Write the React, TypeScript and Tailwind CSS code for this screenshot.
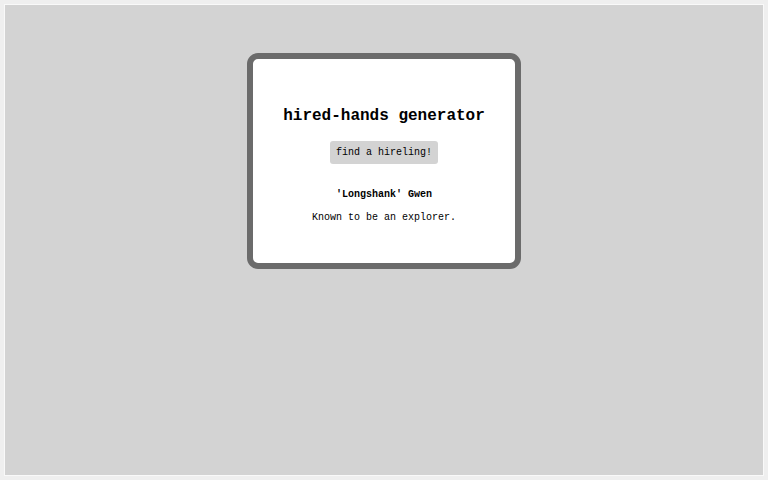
export default function App() {
  return (
    <div className="h-[480px] w-[768px] bg-[#efefef] p-1 font-['Liberation_Mono',monospace] text-black">
      <div className="flex h-full w-full justify-center border border-[#f9f9f9] bg-[#d3d3d3] pt-[48px]">
        <div className="flex h-[216px] w-[274px] flex-col items-center rounded-[11px] border-[6px] border-[#6b6b6b] bg-white pt-[47px]">
          <h1 className="text-[16px] font-bold leading-[20px]">hired-hands generator</h1>
          <button className="mt-[15px] h-[23px] rounded-[3px] bg-[#d3d3d3] px-[6px] text-[10px] leading-[23px]">
            find a hireling!
          </button>
          <p className="mt-[24px] text-[10px] font-bold leading-[14px]">'Longshank' Gwen</p>
          <p className="mt-[9px] text-[10px] leading-[14px]">Known to be an explorer.</p>
        </div>
      </div>
    </div>
  );
}
